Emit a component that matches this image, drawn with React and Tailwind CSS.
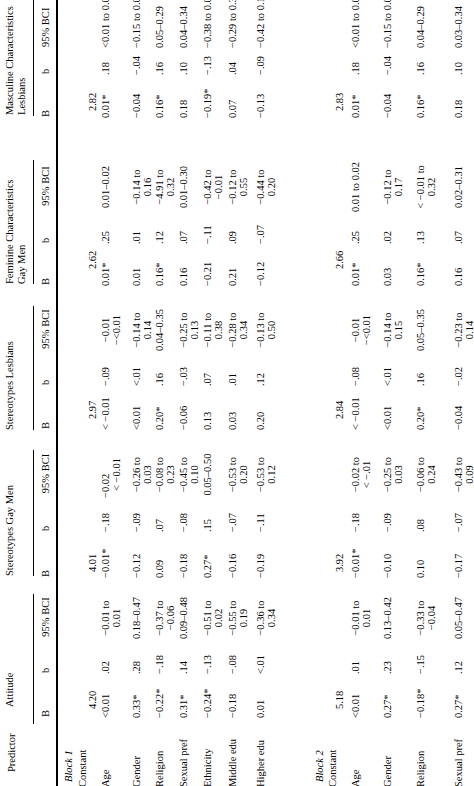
const G = [
  { head: ["Attitude"], wT: "w-[130px]", rm: "ml-0", hp: "pl-[17px]", wB: "w-[48px]", wb: "w-[36px]", wC: "w-[46px]", gap: "w-[13px]", pB: "pl-[7px]", pK: "pl-[16px]", pb: "pl-[3px]", al: "text-center" },
  { head: ["Stereotypes Gay Men"], wT: "w-[131px]", rm: "ml-[5px]", hp: "pl-0", wB: "w-[48px]", wb: "w-[36px]", wC: "w-[47px]", gap: "w-[16px]", pB: "pl-[4px]", pK: "pl-[10px]", pb: "pl-[2px]", al: "text-center" },
  { head: ["Stereotypes Lesbians"], wT: "w-[128px]", rm: "ml-[4px]", hp: "pl-0", wB: "w-[45px]", wb: "w-[37px]", wC: "w-[46px]", gap: "w-[16px]", pB: "pl-[5px]", pK: "pl-[16px]", pb: "pl-[4px]", al: "text-center" },
  { head: ["Feminine Characteristics", "Gay Men"], wT: "w-[130px]", rm: "ml-[6px]", hp: "pl-0", wB: "w-[43px]", wb: "w-[35px]", wC: "w-[52px]", gap: "w-[38px]", pB: "pl-[5px]", pK: "pl-[22px]", pb: "pl-[4px]", al: "text-center" },
  { head: ["Masculine Characteristics", "Lesbians"], wT: "w-[131px]", rm: "ml-[6px]", hp: "pl-px", wB: "w-[44px]", wb: "w-[27px]", wC: "w-[60px]", gap: "w-0", pB: "pl-[5px]", pK: "pl-[12px]", pb: "pl-[4px]", al: "text-left pl-[4px]" },
];

const rows = [
  { label: "Block 1", italic: true, h: "h-[14px]" },
  { label: "Constant", h: "h-[23px]", k: ["4.20", "4.01", "2.97", "2.62", "2.82"], kpt: "pt-[10px]" },
  { label: "Age", h: "h-[31px]", c: [
    ["<0.01", ".02", ["−0.01 to", "0.01"]],
    ["−0.01*", "−.18", [{ t: "−0.02", cls: "mr-[28px]" }, "< −0.01"]],
    ["< −0.01", "−.09", ["−0.01", "−<0.01"]],
    ["0.01*", ".25", ["0.01–0.02"]],
    ["0.01*", ".18", ["<0.01 to 0.01"]],
  ] },
  { label: "Gender", h: "h-[23px]", c: [
    ["0.33*", ".28", ["0.18–0.47"]],
    ["−0.12", "−.09", ["−0.26 to", "0.03"]],
    ["<0.01", "<.01", ["−0.14 to", "0.14"]],
    ["0.01", ".01", ["−0.14 to", "0.16"]],
    ["−0.04", "−.04", ["−0.15 to 0.07"]],
  ] },
  { label: "Religion", h: "h-[24px]", c: [
    ["−0.22*", "−.18", ["−0.37 to", "−0.06"]],
    ["0.09", ".07", ["−0.08 to", "0.23"]],
    ["0.20*", ".16", ["0.04–0.35"]],
    ["0.16*", ".12", ["−4.91 to", "0.32"]],
    ["0.16*", ".16", ["0.05–0.29"]],
  ] },
  { label: "Sexual pref", h: "h-[24px]", c: [
    ["0.31*", ".14", ["0.09–0.48"]],
    ["−0.18", "−.08", ["−0.45 to", "0.10"]],
    ["−0.06", "−.03", ["−0.25 to", "0.13"]],
    ["0.16", ".07", ["0.01–0.30"]],
    ["0.18", ".10", ["0.04–0.34"]],
  ] },
  { label: "Ethnicity", h: "h-[25px]", c: [
    ["−0.24*", "−.13", ["−0.51 to", "0.02"]],
    ["0.27*", ".15", ["0.05–0.50"]],
    ["0.13", ".07", ["−0.11 to", "0.38"]],
    ["−0.21", "−.11", ["−0.42 to", "−0.01"]],
    ["−0.19*", "−.13", ["−0.38 to 0.01"]],
  ] },
  { label: "Middle edu", h: "h-[28px]", c: [
    ["−0.18", "−.08", ["−0.55 to", "0.19"]],
    ["−0.16", "−.07", ["−0.53 to", "0.20"]],
    ["0.03", ".01", ["−0.28 to", "0.34"]],
    ["0.21", ".09", ["−0.12 to", "0.55"]],
    ["0.07", ".04", ["−0.29 to 0.39"]],
  ] },
  { label: "Higher edu", h: "h-[59px]", c: [
    ["0.01", "<.01", ["−0.36 to", "0.34"]],
    ["−0.19", "−.11", ["−0.53 to", "0.12"]],
    ["0.20", ".12", ["−0.13 to", "0.50"]],
    ["−0.12", "−.07", ["−0.44 to", "0.20"]],
    ["−0.13", "−.09", ["−0.42 to 0.19"]],
  ] },
  { label: "Block 2", italic: true, h: "h-[13px]" },
  { label: "Constant", h: "h-[23px]", k: ["5.18", "3.92", "2.84", "2.66", "2.83"], kpt: "pt-[7px]" },
  { label: "Age", h: "h-[32px]", c: [
    ["<0.01", ".01", ["−0.01 to", "0.01"]],
    ["−0.01*", "−.18", ["−0.02 to", "< −.01"]],
    ["< −0.01", "−.08", ["−0.01", "−<0.01"]],
    ["0.01*", ".25", ["0.01 to 0.02"]],
    ["0.01*", ".18", ["<0.01 to 0.01"]],
  ] },
  { label: "Gender", h: "h-[33px]", c: [
    ["0.27*", ".23", ["0.13–0.42"]],
    ["−0.10", "−.09", ["−0.25 to", "0.03"]],
    ["<0.01", "<.01", ["−0.14 to", "0.15"]],
    ["0.03", ".02", ["−0.12 to", "0.17"]],
    ["−0.04", "−.04", ["−0.15 to 0.07"]],
  ] },
  { label: "Religion", h: "h-[38px]", c: [
    ["−0.18*", "−.15", ["−0.33 to", "−0.04"]],
    ["0.10", ".08", ["−0.06 to", "0.24"]],
    ["0.20*", ".16", ["0.05–0.35"]],
    ["0.16*", ".13", ["< −0.01 to", "0.32"]],
    ["0.16*", ".16", ["0.04–0.29"]],
  ] },
  { label: "Sexual pref", h: "h-[32px]", c: [
    ["0.27*", ".12", ["0.05–0.47"]],
    ["−0.17", "−.07", ["−0.43 to", "0.09"]],
    ["−0.04", "−.02", ["−0.23 to", "0.14"]],
    ["0.16", ".07", ["0.02–0.31"]],
    ["0.18", ".10", ["0.03–0.34"]],
  ] },
];

function Header() {
  return (
    <div className="flex h-[34px] leading-[12px]">
      <div className="w-[62px] shrink-0 pl-[14px] pt-[6px] whitespace-nowrap">Predictor</div>
      {G.map((g, i) => (
        <div key={i} className="flex shrink-0">
          <div className={`${g.wT} flex h-full`}>
            <div className={`${g.rm} flex-1 border-b border-black pt-[4px] ${g.hp} whitespace-nowrap`}>
              {g.head.map((l, j) => (
                <div key={j}>{l}</div>
              ))}
            </div>
          </div>
          <div className={`${g.gap} shrink-0`} />
        </div>
      ))}
    </div>
  );
}

function SubHeader() {
  return (
    <div className="flex h-[22px] items-center">
      <div className="w-[62px] shrink-0" />
      {G.map((g, i) => (
        <div key={i} className="flex shrink-0">
          <div className={`${g.wB} ${g.pB} shrink-0`}>B</div>
          <div className={`${g.wb} ${g.pb} shrink-0`}>b</div>
          <div className={`${g.wC} ${g.al} shrink-0 whitespace-nowrap`}>95% BCI</div>
          <div className={`${g.gap} shrink-0`} />
        </div>
      ))}
    </div>
  );
}

function Row({ r }) {
  return (
    <div className={`flex items-start ${r.h}`}>
      <div className={`w-[62px] shrink-0 whitespace-nowrap ${r.italic ? "italic pl-[4px]" : "-ml-px pr-px"}`}>{r.label}</div>
      {G.map((g, i) => {
        const cell = r.c ? r.c[i] : null;
        return (
          <div key={i} className="flex shrink-0">
            <div className={`${g.wB} ${r.k ? g.pK + " " + r.kpt : g.pB} shrink-0 whitespace-nowrap`}>
              {r.k ? r.k[i] : cell ? cell[0] : ""}
            </div>
            <div className={`${g.wb} ${g.pb} shrink-0 whitespace-nowrap`}>{cell ? cell[1] : ""}</div>
            <div className={`${g.wC} ${g.al} shrink-0 whitespace-nowrap`}>
              {cell
                ? cell[2].map((l, j) =>
                    typeof l === "string" ? (
                      <div key={j}>{l}</div>
                    ) : (
                      <div key={j} className={l.cls}>{l.t}</div>
                    )
                  )
                : null}
            </div>
            <div className={`${g.gap} shrink-0`} />
          </div>
        );
      })}
    </div>
  );
}

export default function App() {
  return (
    <div className="relative w-[474px] h-[786px] overflow-hidden bg-white">
      <div className="absolute left-0 top-[786px] w-[786px] h-[474px] origin-top-left -rotate-90 font-['Liberation_Serif','Times_New_Roman',serif] text-[10.5px] leading-[11px] text-black">
        <Header />
        <SubHeader />
        <div className="h-[2px] w-[800px] bg-black" />
        <div className="h-[5px]" />
        {rows.map((r, i) => (
          <Row key={i} r={r} />
        ))}
      </div>
    </div>
  );
}
